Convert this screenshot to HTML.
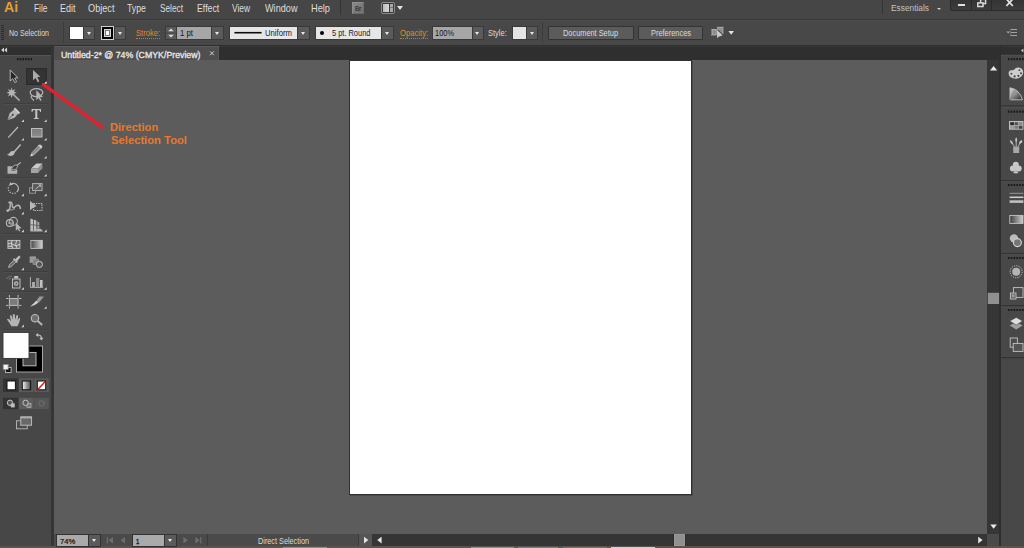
<!DOCTYPE html>
<html>
<head>
<meta charset="utf-8">
<title>Untitled-2</title>
<style>
html,body{margin:0;padding:0;}
body{width:1024px;height:548px;overflow:hidden;background:#484848;font-family:"Liberation Sans",sans-serif;position:relative;color:#d6d6d6;}
.abs{position:absolute;}
.tx{position:absolute;white-space:nowrap;line-height:normal;transform-origin:0 50%;display:block;}
#menubar{left:0;top:0;width:1024px;height:19px;background:#464646;}
#menubar .mi{position:absolute;top:3px;font-size:10px;color:#dcdcdc;line-height:12px;white-space:nowrap;}
#menuline{left:0;top:19px;width:1024px;height:1px;background:#383838;}
#ctrlbar{left:0;top:20px;width:1024px;height:25px;background:#484848;box-shadow:inset 0 1px 0 #4e4e4e;}
#ctrlline{left:0;top:45px;width:1024px;height:1px;background:#2e2e2e;}
.lbl{position:absolute;font-size:8px;line-height:10px;white-space:nowrap;color:#d8d8d8;}
.olbl{color:#e08a2a;border-bottom:1px dotted #e08a2a;}
.fld{position:absolute;background:#a6a6a6;border:1px solid #3a3a3a;box-sizing:border-box;color:#1a1a1a;font-size:8px;line-height:11px;}
.dd{position:absolute;background:#5a5a5a;border:1px solid #3a3a3a;box-sizing:border-box;}
.dd:after{content:"";position:absolute;left:50%;top:50%;margin-left:-2.8px;margin-top:-1.3px;border-left:2.8px solid transparent;border-right:2.8px solid transparent;border-top:3.4px solid #e8e8e8;}
.dd.sm:after{border-top-width:3px;border-left-width:2.4px;border-right-width:2.4px;margin-left:-2.4px;margin-top:-1px;}
.btn{position:absolute;background:#5b5b5b;border:1px solid #333;box-sizing:border-box;color:#dadada;font-size:8px;line-height:11px;text-align:center;border-radius:1px;}
#toolhead{left:0;top:46px;width:51px;height:9px;background:#2f2f2f;box-shadow:inset 0 1px 0 #3a3a3a;}
#tools{left:0;top:55px;width:51px;height:491px;background:#474747;box-shadow:inset 0 1px 0 #545454;}
#gapL{left:51px;top:46px;width:3px;height:500px;background:#353535;}
#tabbar{left:54px;top:46px;width:945px;height:14px;background:#2f2f2f;box-shadow:inset 0 1px 0 #383838;}
#tab{left:54px;top:46px;width:165px;height:14px;background:#4f4f4f;box-shadow:inset 0 1px 0 #5c5c5c, inset -1px 0 0 #585858;}
#tabtxt{left:60px;top:48px;font-size:8.5px;line-height:10px;color:#e4e4e4;font-weight:bold;white-space:nowrap;}
#canvas{left:54px;top:60px;width:933px;height:474px;background:#5c5c5c;overflow:hidden;}
#artboard{left:296px;top:1px;width:341px;height:433px;background:#fff;box-shadow:0 0 0 1px #303030,1px 1px 0 1px rgba(48,48,48,0.4);}
#vscroll{left:987px;top:60px;width:12px;height:474px;background:#363636;}
#bottombar{left:54px;top:534px;width:946px;height:12px;background:#4a4a4a;}
#rightgap{left:999px;top:46px;width:2px;height:500px;background:#2e2e2e;}
#rpanel{left:1001px;top:46px;width:23px;height:500px;background:#484848;}
#rhead{left:1001px;top:46px;width:23px;height:9px;background:#2f2f2f;box-shadow:inset 0 1px 0 #3a3a3a;}
#bstrip{left:0;top:546px;width:1024px;height:2px;background:#58554e;}
</style>
</head>
<body>
<div id="menubar" class="abs"></div>
<div id="menuline" class="abs"></div>
<div id="ctrlbar" class="abs"></div>
<div id="ctrlline" class="abs"></div>

<!-- menubar widgets -->
<div class="abs" style="left:340px;top:0;width:1px;height:15px;background:#353535;"></div>
<div class="abs" style="left:352px;top:2px;width:12px;height:12px;box-sizing:border-box;border:1px solid #8e8e8e;border-right-color:#6e6e6e;border-bottom-color:#6a6a6a;background:linear-gradient(135deg,#888 0,#707070 100%);"></div>
<div class="abs" style="left:381px;top:2px;width:14px;height:12px;box-sizing:border-box;border:1px solid #8a8a8a;border-radius:2px;background:#3a3a3a;"></div>
<div class="abs" style="left:383px;top:4px;width:6px;height:8px;background:linear-gradient(90deg,#bdbdbd,#d6d6d6);"></div>
<div class="abs" style="left:390px;top:4px;width:3px;height:8px;background:#a8a8a8;"></div>
<div class="abs" style="left:390px;top:7px;width:3px;height:1px;background:#777;"></div>
<div class="abs" style="left:397px;top:6px;width:0;height:0;border-left:3px solid transparent;border-right:3px solid transparent;border-top:4px solid #e2e2e2;"></div>
<div class="abs" style="left:882px;top:0;width:1px;height:14px;background:#353535;"></div>
<div class="abs" style="left:937px;top:8px;width:0;height:0;border-left:2px solid transparent;border-right:2px solid transparent;border-top:2px solid #cfcfcf;"></div>
<div class="abs" style="left:950px;top:-1px;width:74px;height:12px;box-sizing:border-box;border:1px solid #2a2a2a;border-right:none;border-radius:0 0 0 3px;background:linear-gradient(#343434,#3c3c3c);"></div>
<div class="abs" style="left:971px;top:0;width:1px;height:10px;background:#2a2a2a;"></div>
<div class="abs" style="left:991px;top:0;width:1px;height:10px;background:#2a2a2a;"></div>
<div class="abs" style="left:958px;top:4px;width:7px;height:2px;background:#e0e0e0;"></div>
<svg class="abs" style="left:976px;top:0" width="11" height="8" viewBox="976 0 11 8"><rect x="980.600" y="-0.600" width="5" height="4.200" fill="none" stroke="#dadada" stroke-width="1.500"/><rect x="977.800" y="2.900" width="5.200" height="3.600" fill="#383838" stroke="#dadada" stroke-width="1.500"/></svg>
<svg class="abs" style="left:1005px;top:0" width="10" height="7" viewBox="1005 0 10 7"><path d="M1006.400 -1 L1012.800 6 M1012.800 -1 L1006.400 6" stroke="#e2e2e2" stroke-width="1.800" fill="none"/></svg>
<!-- control bar right menu -->
<svg class="abs" style="left:1005px;top:27px" width="14" height="11" viewBox="1005 27 14 11"><path d="M1006.400 31.400 H1010 L1008.200 33.600Z" fill="#a8a8a8"/><path d="M1011 29.500H1017M1011 32.500H1017M1011 35.500H1017" stroke="#a4a4a4" stroke-width="1"/><path d="M1010.500 29 V36" stroke="#8a8a8a" stroke-width="0.600"/></svg>
<!-- control bar widgets -->
<div class="abs" style="left:1px;top:25px;width:3px;height:16px;background:repeating-linear-gradient(to bottom,#2c2c2c 0,#2c2c2c 1px,transparent 1px,transparent 2px);"></div>
<div class="abs" style="left:63px;top:22px;width:1px;height:21px;background:#3c3c3c;"></div>
<div class="fld" style="left:69px;top:26px;width:15px;height:14px;background:#fff;"></div>
<div class="dd sm" style="left:83px;top:26px;width:12px;height:14px;"></div>
<div class="abs" style="left:101px;top:26px;width:13px;height:14px;background:#000;border:1px solid #cfcfcf;box-sizing:border-box;"></div>
<div class="abs" style="left:104px;top:29px;width:7px;height:8px;background:#777;border:1px solid #d8d8d8;box-sizing:border-box;"></div><div class="abs" style="left:106px;top:31px;width:3px;height:4px;background:#fff;"></div>
<div class="dd sm" style="left:114px;top:26px;width:12px;height:14px;"></div>
<div class="dd" style="left:165px;top:26px;width:12px;height:14px;"></div>
<svg class="abs" style="left:165px;top:26px" width="12" height="14" viewBox="0 0 12 14"><rect x="1" y="1" width="10" height="12" fill="#5a5a5a"/><path d="M1 7H11" stroke="#444" stroke-width="1"/><path d="M3.200 5.200 L6 2.400 L8.800 5.200Z M3.200 8.800 L6 11.600 L8.800 8.800Z" fill="#dcdcdc"/></svg>
<div class="abs" style="left:136px;top:38px;width:24px;height:0;border-top:1px dotted #c07a2a;"></div>
<div class="abs" style="left:400px;top:38px;width:28px;height:0;border-top:1px dotted #c07a2a;"></div>
<div class="fld" style="left:176px;top:26px;width:36px;height:14px;"></div>
<div class="dd" style="left:211px;top:26px;width:13px;height:14px;"></div>
<div class="fld" style="left:229px;top:26px;width:69px;height:14px;background:#e6e6e6;"></div>
<svg class="abs" style="left:234px;top:30px" width="30" height="6" viewBox="234 30 30 6"><path d="M234.400 32.700H261.600" stroke="#0c0c0c" stroke-width="1.600"/></svg>
<div class="dd" style="left:297px;top:26px;width:13px;height:14px;"></div>
<div class="fld" style="left:315px;top:26px;width:67px;height:14px;background:#e6e6e6;"></div>
<div class="abs" style="left:320px;top:31px;width:4px;height:4px;border-radius:2px;background:#000;"></div>
<div class="dd" style="left:381px;top:26px;width:13px;height:14px;"></div>
<div class="fld" style="left:432px;top:26px;width:41px;height:14px;"></div>
<div class="dd" style="left:472px;top:26px;width:12px;height:14px;"></div>
<div class="fld" style="left:512px;top:26px;width:15px;height:14px;background:#e4e4e4;"></div>
<div class="dd sm" style="left:526px;top:26px;width:12px;height:14px;"></div>
<div class="abs" style="left:542px;top:22px;width:1px;height:21px;background:#3c3c3c;"></div>
<div class="btn" style="left:548px;top:26px;width:86px;height:14px;"></div>
<div class="btn" style="left:638px;top:26px;width:65px;height:14px;"></div>


<div id="toolhead" class="abs"></div>
<div id="tools" class="abs"></div>
<div id="gapL" class="abs"></div>
<div id="tabbar" class="abs"></div>
<div id="tab" class="abs"></div>
<div id="canvas" class="abs"><div id="artboard" class="abs"></div></div>
<div id="vscroll" class="abs"></div>
<div id="bottombar" class="abs"></div>
<div id="rightgap" class="abs"></div>
<div id="rpanel" class="abs"></div>
<div id="rhead" class="abs"></div>
<div id="bstrip" class="abs"></div>
<svg class="abs" style="left:0;top:0" width="56" height="548" viewBox="0 0 56 548">
<defs>
<linearGradient id="gH" x1="0" x2="1" y1="0" y2="0"><stop offset="0" stop-color="#4a4a4a"/><stop offset="1" stop-color="#d0d0d0"/></linearGradient>
<linearGradient id="gV" x1="0" x2="0" y1="0" y2="1"><stop offset="0" stop-color="#7c7c7c"/><stop offset="1" stop-color="#8c8c8c"/></linearGradient>
<linearGradient id="gW" x1="0" x2="1" y1="0" y2="0"><stop offset="0" stop-color="#f4f4f4"/><stop offset="1" stop-color="#4a4a4a"/></linearGradient>
</defs>
<!-- header chevrons -->
<path d="M4 47.500 L1.100 50 L4 52.500Z M7.100 47.500 L4.200 50 L7.100 52.500Z" fill="#d0d0d0"/>
<!-- grip -->
<path d="M17 59.200H32.200" stroke="#181818" stroke-width="2.200" stroke-dasharray="1.600 1.100"/>
<!-- separators -->
<g stroke="#3e3e3e" stroke-width="1"><path d="M3 103.5H48M3 177.5H48M3 233.5H48M3 271.5H48M3 291.5H48M3 329.5H48"/></g>
<g stroke="#4d4d4d" stroke-width="1"><path d="M3 104.5H48M3 178.5H48M3 234.5H48M3 272.5H48M3 292.5H48M3 330.5H48"/></g>
<!-- selected tool bg -->
<rect x="26.5" y="68.5" width="20" height="16" fill="#333" stroke="#2b2b2b"/>
<!-- selection tool -->
<path d="M10.2 70 V81 L12.8 78.7 L14.8 82.6 L16.6 81.7 L14.7 78 L18 77.8Z" fill="#262626" stroke="#c2c2c2" stroke-width="0.9" stroke-linejoin="round"/>
<!-- direct selection -->
<path d="M33 70 V80.3 L35.6 78 L37.7 82.3 L39.3 81.5 L37.3 77.3 L40.3 76.8Z" fill="#ababab"/>
<path d="M0 2.600 L2.600 0 V2.600Z" fill="#fff" transform="translate(44 81.2)"/>
<!-- magic wand -->
<path d="M11.6 87.6 L12.6 90.6 L15.4 89 L13.9 91.8 L16.9 92.8 L13.9 93.8 L15.2 96.4 L12.6 95 L11.6 98 L10.6 95 L7.9 96.5 L9.3 93.8 L6.4 92.8 L9.3 91.8 L7.9 89.1 L10.6 90.6Z" fill="#b4b4b4"/>
<path d="M13.5 94.6 L19.6 100.6" stroke="#a8a8a8" stroke-width="1.5"/>
<!-- lasso -->
<ellipse cx="36.5" cy="92.6" rx="6.3" ry="4" fill="none" stroke="#b8b8b8" stroke-width="1.2"/>
<path d="M31.5 95.5 q-1 2 1 3.5 q1.5 1 1 2" fill="none" stroke="#b0b0b0" stroke-width="1.1"/>
<path d="M36.3 90.3 V100.3 L38.6 98 L40.3 101 L41.6 100.3 L40 97.3 L43 97Z" fill="#b2b2b2"/>
<!-- pen -->
<path d="M7.4 120.2 L9.6 113.2 L14.2 109.4 L18.2 113.4 L14.6 117.8Z" fill="#b6b6b6"/>
<path d="M7.6 120 L12.6 115" stroke="#4a4a4a" stroke-width="0.8"/>
<circle cx="12.8" cy="114.8" r="1" fill="#3c3c3c"/>
<path d="M15 107.6 L20.2 112.8 L18.6 114.2 L13.6 109Z" fill="#cdcdcd"/>
<path d="M0 2.600 L2.600 0 V2.600Z" fill="#d6d6d6" transform="translate(21.3 119.4)"/>
<path d="M0 2.600 L2.600 0 V2.600Z" fill="#d6d6d6" transform="translate(44 119.4)"/>
<!-- type -->
<path d="M31.600 109 H41 V112 H40.300 Q40 110.200 38.400 110.100 H37.300 V117.200 Q37.300 118.100 38.800 118.200 V118.900 H33.800 V118.200 Q35.300 118.100 35.300 117.200 V110.100 H34.200 Q32.600 110.200 32.300 112 H31.600Z" fill="#c6c6c6"/>
<!-- line -->
<path d="M8.2 137.6 L18 127" stroke="#bcbcbc" stroke-width="1.2"/>
<path d="M0 2.600 L2.600 0 V2.600Z" fill="#d6d6d6" transform="translate(21.3 138)"/>
<!-- rectangle -->
<rect x="31.5" y="128.5" width="10.5" height="8.5" fill="url(#gV)" stroke="#bdbdbd"/>
<path d="M0 2.600 L2.600 0 V2.600Z" fill="#d6d6d6" transform="translate(44 138)"/>
<!-- brush -->
<path d="M20.6 144.4 L13.6 152.4" stroke="#b9b9b9" stroke-width="1.5"/>
<path d="M13.2 150.8 Q10.5 151 9.2 153.2 Q8.4 154.4 6.8 154.6 Q9.6 156.6 12.6 155.6 Q14.8 154.4 14.6 152.2Z" fill="#bababa"/>
<!-- pencil -->
<path d="M38.2 145.6 L41.4 148.2 L34.4 155 L30.4 156.6 L31.6 152.4Z" fill="#9c9c9c"/>
<path d="M38.2 145.6 Q40 144.200 41.4 145.6 Q42.6 146.800 41.4 148.2Z" fill="#d2d2d2" stroke="#d2d2d2" stroke-width="0.8"/>
<path d="M30.4 156.6 L31.3 153.400 L33.5 155.3Z" fill="#dcdcdc"/>
<path d="M32.4 153.6 L39.6 146.6" stroke="#6c6c6c" stroke-width="0.7"/>
<path d="M0 2.600 L2.600 0 V2.600Z" fill="#d6d6d6" transform="translate(44 156)"/>
<!-- blob brush -->
<path d="M7.500 166.200 H12.600 Q10.400 168.600 11.200 170.600 Q14.400 172 17.200 169 V173.800 H7.500Z" fill="#b2b2b2"/>
<path d="M11.600 170.200 Q11.600 166.600 15 165 Q17.600 164.400 17.600 166.600 Q16.400 170.400 11.600 170.200Z" fill="#3a3a3a" stroke="#b8b8b8" stroke-width="0.900"/>
<path d="M17 165.400 L20.800 162.400" stroke="#bdbdbd" stroke-width="1.200"/>
<!-- eraser -->
<path d="M31 168.600 L36.4 163.600 H42.4 L38 168.600Z" fill="#cacaca"/>
<path d="M31 168.600 H38 V173 H31Z" fill="#a4a4a4"/>
<path d="M38 168.600 L42.4 163.600 V168.200 L38 173Z" fill="#8e8e8e"/>
<path d="M0 2.600 L2.600 0 V2.600Z" fill="#d6d6d6" transform="translate(44 174)"/>
<!-- rotate -->
<path d="M11.400 183.800 A5 5 0 0 1 16.700 192.100" fill="none" stroke="#b8b8b8" stroke-width="1.200"/>
<path d="M15.600 192.900 A5 5 0 0 1 9.200 185.600" fill="none" stroke="#b8b8b8" stroke-width="1.200" stroke-dasharray="1.200 1.300"/>
<path d="M9.200 185.600 L10.200 182.200 L13 184.800Z" fill="#c4c4c4"/>
<path d="M0 2.600 L2.600 0 V2.600Z" fill="#d6d6d6" transform="translate(21.3 193.600)"/>
<!-- scale -->
<rect x="29.600" y="187.800" width="6" height="5.400" fill="none" stroke="#9c9c9c" stroke-width="0.9"/>
<rect x="32.600" y="183.600" width="9.500" height="7" fill="#5c5c5c" stroke="#b8b8b8" stroke-width="0.9"/>
<path d="M35.600 189.200 L40.400 185" stroke="#c0c0c0" stroke-width="0.9"/>
<path d="M38.200 184.600 H40.800 V187.200Z" fill="#c4c4c4"/>
<path d="M0 2.600 L2.600 0 V2.600Z" fill="#d6d6d6" transform="translate(44 193.600)"/>
<!-- width/warp tool -->
<path d="M7.400 211 Q9.400 210.600 10 207.400 Q10.800 203 9.200 202.400 Q11.600 201 12.200 204.600 Q12.400 208.600 14.400 207.400 Q16.200 205 18.200 205.200 Q20.400 205.800 20.400 209" fill="none" stroke="#b4b4b4" stroke-width="1.500"/>
<path d="M8 209.600 Q12 211 15 208.600" fill="none" stroke="#a4a4a4" stroke-width="1"/>
<circle cx="7.600" cy="210.600" r="1.200" fill="#c4c4c4"/>
<path d="M0 2.600 L2.600 0 V2.600Z" fill="#d6d6d6" transform="translate(21.3 211.800)"/>
<!-- free transform -->
<rect x="33.500" y="203.500" width="8.500" height="7" fill="none" stroke="#bdbdbd" stroke-width="1.100" stroke-dasharray="1.400 1"/>
<path d="M30 201 V210.400 L32.400 208.200 L36.600 206Z" fill="#b8b8b8"/>
<!-- shape builder -->
<circle cx="9.800" cy="223" r="3.400" fill="none" stroke="#bcbcbc" stroke-width="1.100"/>
<circle cx="13.400" cy="221.400" r="4" fill="none" stroke="#b0b0b0" stroke-width="1.100"/>
<path d="M8 223 H14" stroke="#bdbdbd" stroke-width="0.9"/>
<path d="M15.800 222.600 V230.800 L17.800 229 L19 231.400 L20.200 230.800 L19 228.400 L21.600 228.200Z" fill="#b4b4b4"/>
<path d="M0 2.600 L2.600 0 V2.600Z" fill="#d6d6d6" transform="translate(21.3 229.600)"/>
<!-- perspective grid -->
<path d="M30.400 218.400 L33.200 219.400 V231 H30.400Z M34 219.800 L36.400 220.600 V231 H34Z" fill="#bebebe"/>
<path d="M37.300 221.400 L39.300 222.200 V228.400 H37.300Z" fill="#a6a6a6"/>
<path d="M36.400 228.800 H40.600 L42.600 230.400 V231.400 H30.400 V230.400 H36.400Z" fill="#b4b4b4"/>
<path d="M30.400 224.600 L39.300 225.600" stroke="#5a5a5a" stroke-width="0.800"/>
<path d="M0 2.600 L2.600 0 V2.600Z" fill="#d6d6d6" transform="translate(44 229.600)"/>
<!-- mesh -->
<rect x="7.900" y="240.400" width="12" height="8" fill="#6a6a6a" stroke="#c4c4c4" stroke-width="0.9"/>
<path d="M8 244 Q11 242 13 244.600 Q16 247 20 244.400 M12 240.400 Q10.600 244 12.600 248.400 M16.600 240.400 Q14.600 244.600 17 248.400 M8 246.600 Q10 245.400 12 246.600" fill="none" stroke="#dcdcdc" stroke-width="0.9"/>
<!-- gradient -->
<rect x="30.900" y="240.400" width="11.400" height="8" fill="url(#gH)" stroke="#c0c0c0" stroke-width="0.9"/>
<!-- eyedropper -->
<path d="M8.600 267.400 L9.400 264.800 L15 259.200 L16.800 261 L11.200 266.600Z" fill="#6c6c6c" stroke="#b8b8b8" stroke-width="0.9"/>
<path d="M13.600 258.600 L17.400 262.400" stroke="#b4b4b4" stroke-width="1.800"/>
<path d="M15.600 259.600 L18.400 256.400 Q19.800 255.400 20 257.200 L17 260.800Z" fill="#c0c0c0" stroke="#c0c0c0" stroke-width="0.800"/>
<path d="M0 2.600 L2.600 0 V2.600Z" fill="#d6d6d6" transform="translate(21.3 267.600)"/>
<!-- blend -->
<rect x="29.600" y="256.400" width="6.400" height="6.400" fill="#9a9a9a"/>
<rect x="33" y="259" width="5.600" height="5.600" fill="#828282" stroke="#9c9c9c" stroke-width="0.600"/>
<circle cx="39.400" cy="264.400" r="3.100" fill="#585858" stroke="#c6c6c6" stroke-width="1"/>
<!-- symbol sprayer -->
<rect x="12.500" y="279" width="7.500" height="9" fill="#4c4c4c" stroke="#bcbcbc" stroke-width="1"/>
<rect x="14.200" y="276" width="4" height="2.400" fill="#c4c4c4"/>
<circle cx="16.200" cy="283.600" r="2.300" fill="#b4b4b4"/>
<path d="M15.600 282.400 L17.600 283.600 L15.600 284.800Z" fill="#4c4c4c"/>
<path d="M7 278.600 L8.400 277.200 M9.400 279.400 L10.600 278 M9 276.600 L9.800 275.800 M11 276.800 L11.600 276" stroke="#a8a8a8" stroke-width="0.800"/>
<path d="M0 2.600 L2.600 0 V2.600Z" fill="#d6d6d6" transform="translate(21.3 287.200)"/>
<!-- graph -->
<path d="M30.400 277 V287.400 H43" fill="none" stroke="#bcbcbc" stroke-width="0.900"/>
<rect x="32" y="282" width="3" height="5" fill="#a8a8a8"/>
<rect x="36" y="278" width="3.300" height="9" fill="#8a8a8a"/>
<rect x="40" y="280" width="2.600" height="7" fill="#c2c2c2"/>
<path d="M0 2.600 L2.600 0 V2.600Z" fill="#d6d6d6" transform="translate(44 287.200)"/>
<!-- artboard -->
<rect x="9.400" y="298.500" width="8.700" height="6.900" fill="#7c7c7c"/>
<path d="M6 298.500 H8.600 M9.400 298.500 H18.100 M18.900 298.500 H21.400 M6 305.400 H8.600 M9.400 305.400 H18.100 M18.900 305.400 H21.400 M9.400 295 V297.700 M9.400 298.500 V305.400 M9.400 306.200 V308.600 M18.100 295 V297.700 M18.100 298.500 V305.400 M18.100 306.200 V308.600" stroke="#c8c8c8" stroke-width="0.900"/>
<!-- slice -->
<path d="M30 306.800 Q34 303.400 36.400 300.600 L38.600 302.400 Q35 305.400 30 306.800Z" fill="#d0d0d0"/>
<path d="M36.600 300.400 L39.400 296.600 H44 L39 302.400Z" fill="#9a9a9a"/>
<path d="M0 2.600 L2.600 0 V2.600Z" fill="#d6d6d6" transform="translate(44 306.200)"/>
<!-- hand -->
<path d="M11.400 326.200 Q9.400 322.800 7 319.600 Q7.600 318.200 9.400 319.400 L11 321.200 L9.800 315.800 Q10.600 314.600 11.600 315.600 L12.800 319.800 L12.800 314.600 Q13.800 313.600 14.800 314.600 L15.200 319.800 L16.400 315.400 Q17.600 314.600 18.200 315.800 L17.600 320.600 L19 318 Q20.200 317.600 20.200 318.800 Q19.400 323 17.400 326.200Z" fill="#b4b4b4"/>
<path d="M0 2.600 L2.600 0 V2.600Z" fill="#d6d6d6" transform="translate(21.3 324.600)"/>
<!-- zoom -->
<circle cx="35" cy="318.200" r="3.700" fill="#707070" stroke="#b8b8b8" stroke-width="1.200"/>
<path d="M37.800 321 L42.200 325" stroke="#b8b8b8" stroke-width="1.800"/>
<!-- fill / stroke -->
<rect x="16.500" y="346" width="26" height="26" fill="#000" stroke="#b4b4b4" stroke-width="0.900"/>
<rect x="23" y="352.400" width="13" height="13.400" fill="#484848" stroke="#c8c8c8" stroke-width="0.900"/>
<rect x="3" y="332.400" width="26" height="26" fill="#fff" stroke="#333" stroke-width="0.900"/>
<!-- swap -->
<path d="M37.400 335 Q41.400 334.600 41.400 338.600" fill="none" stroke="#c4c4c4" stroke-width="1.100"/>
<path d="M35.600 335 L38.200 333 V337Z M41.400 340.400 L39.400 337.800 H43.400Z" fill="#c4c4c4"/>
<!-- default -->
<rect x="5.500" y="367.500" width="5.600" height="5" fill="#111" stroke="#bdbdbd" stroke-width="0.900"/>
<rect x="3.200" y="364.500" width="5" height="5" fill="#f4f4f4" stroke="#888" stroke-width="0.800"/>
<!-- color mode row -->
<rect x="3" y="378.400" width="15.400" height="13.600" fill="#333"/>
<rect x="18.900" y="378.400" width="14.700" height="13.600" fill="#5a5a5a"/>
<rect x="34.100" y="378.400" width="14.700" height="13.600" fill="#5a5a5a"/>
<rect x="7" y="381" width="8.400" height="8.800" fill="#fff" stroke="#111" stroke-width="1"/>
<rect x="22.300" y="381" width="8.400" height="8.800" fill="url(#gW)" stroke="#111" stroke-width="1"/>
<rect x="37.300" y="381" width="8.400" height="8.800" fill="#fff" stroke="#111" stroke-width="1"/>
<path d="M37.800 389.400 L45.200 381.400" stroke="#e01818" stroke-width="1.500"/>
<!-- draw mode row -->
<rect x="3" y="397.800" width="15.400" height="11.400" fill="#333"/>
<rect x="18.900" y="397.800" width="14.700" height="11.400" fill="#5c5c5c"/>
<rect x="34.100" y="397.800" width="14.700" height="11.400" fill="#565656"/>
<circle cx="10" cy="402.800" r="2.700" fill="#555" stroke="#c4c4c4" stroke-width="1"/>
<rect x="10.800" y="403.400" width="4" height="4" fill="#bdbdbd"/>
<rect x="27" y="403.400" width="4" height="4" fill="#7a7a7a" stroke="#b4b4b4" stroke-width="0.700"/>
<circle cx="25.600" cy="402.800" r="2.700" fill="#5c5c5c" stroke="#c4c4c4" stroke-width="1"/>
<circle cx="41.600" cy="403.400" r="2.700" fill="none" stroke="#6e6e6e" stroke-width="1"/>
<path d="M41.600 403.400 H44" stroke="#6e6e6e" stroke-width="0.800"/>
<!-- screen mode -->
<rect x="16.500" y="420.800" width="10.800" height="8" fill="#4c4c4c" stroke="#b8b8b8" stroke-width="0.900"/>
<rect x="20.800" y="416.800" width="10.800" height="8.400" fill="#686868" stroke="#c4c4c4" stroke-width="0.900"/>
<path d="M20.800 417.800 H31.600" stroke="#c4c4c4" stroke-width="1"/>
</svg>

<svg class="abs" style="left:984px;top:44px" width="40" height="504" viewBox="984 44 40 504">
<defs>
<linearGradient id="rgH" x1="0" x2="1" y1="0" y2="0"><stop offset="0" stop-color="#3c3c3c"/><stop offset="1" stop-color="#cfcfcf"/></linearGradient>
<linearGradient id="rgF" x1="0" x2="1" y1="0" y2="1"><stop offset="0" stop-color="#d8d8d8"/><stop offset="0.5" stop-color="#8c8c8c"/><stop offset="1" stop-color="#1c1c1c"/></linearGradient>
</defs>
<!-- header collapse arrow -->
<path d="M1023.4 48.400 V52.400 L1021 50.400Z" fill="#c8c8c8"/>
<!-- group separators -->
<g stroke="#333" stroke-width="1.400"><path d="M1001 106H1024M1001 180.600H1024M1001 253.600H1024M1001 305.800H1024M1001 357.600H1024"/></g>
<g stroke="#545454" stroke-width="0.800"><path d="M1001 55.200H1024M1001 107.200H1024M1001 181.800H1024M1001 254.800H1024M1001 307H1024"/></g>
<!-- grips -->
<g stroke="#181818" stroke-width="2.200" stroke-dasharray="1.600 1.250"><path d="M1007.900 59.100H1024M1007.900 111.600H1024M1007.900 185H1024M1007.900 258H1024M1007.900 310H1024"/></g>
<!-- vscroll arrows & thumb -->
<path d="M990 70.400 L993.600 66 L997.200 70.400Z" fill="#eaeaea"/>
<path d="M990.400 524.600 L993.600 528.800 L996.800 524.600Z" fill="#eaeaea"/>
<rect x="987.800" y="292.800" width="11.300" height="11.200" fill="#909090"/>
<!-- color palette -->
<path d="M1008.600 73.600 Q1008.600 70.600 1011.400 70.200 Q1014 70.400 1014.600 69.200 Q1015.600 67.200 1019 67.400 Q1023.400 68.400 1023.200 72.800 Q1022.400 77.600 1016.200 78.800 Q1009 78.600 1008.600 73.600Z" fill="#cdcdcd"/>
<circle cx="1011.400" cy="73.800" r="1" fill="#474747"/><circle cx="1014.600" cy="76.400" r="1.100" fill="#474747"/><circle cx="1018.400" cy="75.800" r="1.100" fill="#474747"/><circle cx="1021" cy="73.200" r="1" fill="#474747"/><circle cx="1019.400" cy="70.200" r="0.900" fill="#474747"/>
<!-- color guide fan -->
<path d="M1010 87.800 Q1019.600 89.400 1022.400 99.800 H1010Z" fill="url(#rgF)" stroke="#c4c4c4" stroke-width="0.900"/>
<path d="M1010 99.800 L1015.400 89.600 M1010 99.800 L1019.800 93.400" stroke="#6a6a6a" stroke-width="0.500"/>
<!-- swatches -->
<rect x="1009.400" y="121.400" width="13.600" height="7.800" fill="#b8b8b8" stroke="#c8c8c8" stroke-width="0.800"/>
<rect x="1010.200" y="122.200" width="3.700" height="3" fill="#2a2a2a"/><rect x="1014.500" y="122.200" width="3.700" height="3" fill="#555"/><rect x="1018.800" y="122.200" width="3.700" height="3" fill="#8a8a8a"/>
<rect x="1010.200" y="125.800" width="3.700" height="3" fill="#9a9a9a"/><rect x="1014.500" y="125.800" width="3.700" height="3" fill="#7a7a7a"/><rect x="1018.800" y="125.800" width="3.700" height="3" fill="#444"/>
<!-- brushes -->
<rect x="1013.200" y="146.600" width="6" height="6.400" fill="#a8a8a8"/>
<path d="M1014.400 146.600 L1011.600 142.400 M1016.200 146.600 V140 M1018 146.600 L1020.400 142.600" stroke="#b4b4b4" stroke-width="1"/>
<path d="M1010.400 140.400 Q1012.600 141.400 1012.600 143.800 Q1010.400 143.400 1010.400 140.400Z M1016.200 137.800 Q1017.400 139.800 1016.200 141.600 Q1015 139.800 1016.200 137.800Z M1019.400 143.400 Q1019.400 140.800 1022 140.600 Q1022.400 143 1019.400 143.400Z" fill="#d0d0d0" stroke="#d0d0d0" stroke-width="0.600"/>
<!-- symbols club -->
<circle cx="1015.800" cy="164.800" r="3" fill="#c8c8c8"/><circle cx="1012.900" cy="168.600" r="3" fill="#c8c8c8"/><circle cx="1018.700" cy="168.600" r="3" fill="#c8c8c8"/>
<path d="M1015.800 167 Q1016 171 1013.600 173 H1018 Q1015.800 171 1015.800 167Z" fill="#c8c8c8" stroke="#c8c8c8" stroke-width="0.600"/>
<!-- stroke panel -->
<path d="M1009.600 193.300 H1023.400" stroke="#a8a8a8" stroke-width="0.800"/>
<path d="M1009.600 197.300 H1023.400" stroke="#d0d0d0" stroke-width="1.500"/>
<path d="M1009.600 201.600 H1023.400" stroke="#c0c0c0" stroke-width="2.600"/>
<!-- gradient -->
<rect x="1009.800" y="215.400" width="13.200" height="8" fill="url(#rgH)" stroke="#c4c4c4" stroke-width="0.900"/>
<!-- transparency -->
<circle cx="1014" cy="238.400" r="4.200" fill="#bdbdbd"/>
<circle cx="1017.400" cy="242.600" r="4" fill="#767676" stroke="#d6d6d6" stroke-width="1.100"/>
<!-- appearance -->
<circle cx="1016.200" cy="271.800" r="4" fill="#b4b4b4"/>
<circle cx="1016.200" cy="271.800" r="6" fill="none" stroke="#c4c4c4" stroke-width="1" stroke-dasharray="1.200 1.100"/>
<!-- graphic styles -->
<rect x="1013.400" y="287.600" width="9.600" height="9.800" fill="#4c4c4c" stroke="#c4c4c4" stroke-width="0.900"/>
<rect x="1010.400" y="293" width="5.600" height="6" fill="#5a5a5a" stroke="#c4c4c4" stroke-width="0.900"/>
<rect x="1011.600" y="294.200" width="3" height="3.200" fill="#9a9a9a"/>
<!-- layers -->
<path d="M1016.200 322 L1022.600 325.600 L1016.200 329.600 L1009.800 325.600Z" fill="#a0a0a0"/>
<path d="M1016.200 317.400 L1022.600 321 L1016.200 325 L1009.800 321Z" fill="#dedede" stroke="#484848" stroke-width="0.600"/>
<!-- artboards -->
<rect x="1010.200" y="338" width="7.200" height="9.200" fill="#4c4c4c" stroke="#c4c4c4" stroke-width="0.900"/>
<rect x="1013.200" y="343.400" width="9.800" height="8" fill="#545454" stroke="#c4c4c4" stroke-width="0.900"/>
</svg>

<!-- annotation -->
<svg class="abs" style="left:30px;top:70px" width="90" height="70" viewBox="30 70 90 70"><path d="M43.200 84.400 L102.600 127.400" stroke="#e5202e" stroke-width="3.200" stroke-linecap="round"/></svg>
<!-- tab close -->
<svg class="abs" style="left:208px;top:49px" width="8" height="8" viewBox="0 0 8 8"><path d="M2 2.400 L5.800 6.200 M5.800 2.400 L2 6.200" stroke="#d0d0d0" stroke-width="1"/></svg>
<!-- bottom bar -->
<div class="fld" style="left:56px;top:534px;width:33px;height:13px;background:#aaa;border-color:#333;"></div>
<div class="dd" style="left:88px;top:534px;width:13px;height:13px;border-color:#333;"></div>
<div class="fld" style="left:132px;top:534px;width:33px;height:13px;background:#aaa;border-color:#333;"></div>
<div class="dd" style="left:164px;top:534px;width:13px;height:13px;border-color:#333;"></div>
<svg class="abs" style="left:100px;top:534px" width="280" height="13" viewBox="100 534 280 13">
<path d="M107.400 537 V543.600" stroke="#6e6e6e" stroke-width="1.200"/><path d="M113 537 V543.600 L108.600 540.300Z" fill="#6e6e6e"/>
<path d="M125 537 V543.600 L120.600 540.300Z" fill="#6e6e6e"/>
<path d="M183.400 537 V543.600 L187.800 540.300Z" fill="#6e6e6e"/>
<path d="M195.400 537 V543.600 L199.800 540.300Z" fill="#6e6e6e"/><path d="M200.800 537 V543.600" stroke="#6e6e6e" stroke-width="1.200"/>
<path d="M207.500 534 V546" stroke="#3a3a3a" stroke-width="1"/>
<path d="M358.500 534 V546" stroke="#3a3a3a" stroke-width="1"/>
<rect x="359" y="534" width="13" height="12" fill="#555"/>
<path d="M364 536.800 V543.400 L368.400 540.100Z" fill="#e0e0e0"/>
</svg>
<div class="abs" style="left:372px;top:534px;width:614px;height:12px;background:#353535;"></div>
<div class="abs" style="left:673px;top:534px;width:13px;height:12px;background:#2c2c2c;"></div><div class="abs" style="left:674px;top:534px;width:11.400px;height:12px;background:#909090;box-shadow:inset 0 0 0 1px #989898;"></div>
<svg class="abs" style="left:372px;top:534px" width="628" height="13" viewBox="372 534 628 13">
<path d="M381.600 536.800 V543.400 L377.200 540.100Z" fill="#e6e6e6"/>
<path d="M978.200 536.800 V543.400 L982.600 540.100Z" fill="#e6e6e6"/>
</svg>
<div class="abs" style="left:986px;top:534px;width:13px;height:12px;background:#4a4a4a;border-left:1px solid #333;box-sizing:border-box;"></div>
<!-- align icon -->
<svg class="abs" style="left:708px;top:24px" width="30" height="18" viewBox="708 24 30 18">
<rect x="712" y="29.500" width="4.200" height="5.400" fill="#8c8c8c" stroke="#b8b8b8" stroke-width="0.900"/>
<rect x="717.700" y="27.300" width="5.200" height="6.400" fill="#8e8e8e" stroke="#b0b0b0" stroke-width="0.900"/>
<path d="M711.200 28.700 L712 29.500 M716.900 28.700 L716.200 29.500 M711.200 35.700 L712 34.900 M717 26.600 L717.700 27.300 M723.600 26.600 L722.900 27.300" stroke="#a0a0a0" stroke-width="0.700"/>
<path d="M717.100 30.600 V38.200 L719 36.400 L722.600 35.600Z" fill="#cacaca"/>
<path d="M717.600 29.800 L722.800 34.400" stroke="#2e2e2e" stroke-width="0.800"/>
<path d="M728.400 30.900 H733.900 L731.150 34.800Z" fill="#e4e4e4"/>
</svg>
<!-- strip patches -->
<div class="abs" style="left:283px;top:546px;width:44px;height:2px;background:linear-gradient(to bottom,#58554e 0,#58554e 30%,#8a8a8a 30%);"></div>
<div class="abs" style="left:471px;top:546px;width:43px;height:2px;background:linear-gradient(to bottom,#58554e 0,#58554e 30%,#8e8e8e 30%);"></div>
<div class="abs" style="left:518px;top:546px;width:40px;height:2px;background:linear-gradient(to bottom,#58554e 0,#58554e 30%,#7c7c7c 30%);"></div>
<div class="abs" style="left:563px;top:546px;width:44px;height:2px;background:linear-gradient(to bottom,#58554e 0,#58554e 30%,#7a6e66 30%);"></div>
<div class="abs" style="left:611px;top:546px;width:44px;height:2px;background:linear-gradient(to bottom,#58554e 0,#58554e 30%,#cfcfcf 30%);"></div>
<div class="abs" style="left:656px;top:546px;width:368px;height:2px;background:linear-gradient(to bottom,#58554e 0,#58554e 30%,#5e5046 30%);"></div>

<span class="tx" style="left:3.80px;top:-1.74px;font-size:15.40px;color:#dfa035;font-weight:bold;transform:scaleX(0.9217)">Ai</span>
<span class="tx" style="left:355.00px;top:4.42px;font-size:7.60px;color:#161616;will-change:transform;transform:scaleX(0.8560)">Br</span>
<span class="tx" style="left:33.50px;top:2.97px;font-size:10.20px;color:#dedede;transform:scaleX(0.8221)">File</span>
<span class="tx" style="left:59.50px;top:2.97px;font-size:10.20px;color:#dedede;transform:scaleX(0.8826)">Edit</span>
<span class="tx" style="left:87.50px;top:2.97px;font-size:10.20px;color:#dedede;transform:scaleX(0.8997)">Object</span>
<span class="tx" style="left:127.00px;top:2.97px;font-size:10.20px;color:#dedede;transform:scaleX(0.8600)">Type</span>
<span class="tx" style="left:160.00px;top:2.97px;font-size:10.20px;color:#dedede;transform:scaleX(0.8119)">Select</span>
<span class="tx" style="left:196.70px;top:2.97px;font-size:10.20px;color:#dedede;transform:scaleX(0.8618)">Effect</span>
<span class="tx" style="left:232.40px;top:2.97px;font-size:10.20px;color:#dedede;transform:scaleX(0.8262)">View</span>
<span class="tx" style="left:264.50px;top:2.97px;font-size:10.20px;color:#dedede;transform:scaleX(0.8969)">Window</span>
<span class="tx" style="left:310.70px;top:2.97px;font-size:10.20px;color:#dedede;transform:scaleX(0.9068)">Help</span>
<span class="tx" style="left:891.00px;top:2.01px;font-size:9.60px;color:#c2c2c2;transform:scaleX(0.8689)">Essentials</span>
<span class="tx" style="left:8.50px;top:28.40px;font-size:8.40px;color:#dcdcdc;transform:scaleX(0.8421)">No Selection</span>
<span class="tx" style="left:136.00px;top:28.40px;font-size:8.40px;color:#e08a2a;transform:scaleX(0.9041)">Stroke:</span>
<span class="tx" style="left:180.00px;top:28.40px;font-size:8.40px;color:#151515;transform:scaleX(0.9296)">1 pt</span>
<span class="tx" style="left:265.00px;top:28.40px;font-size:8.40px;color:#1a1a2a;transform:scaleX(0.9206)">Uniform</span>
<span class="tx" style="left:331.60px;top:28.40px;font-size:8.40px;color:#1a1a2a;transform:scaleX(0.8866)">5 pt. Round</span>
<span class="tx" style="left:399.60px;top:28.40px;font-size:8.40px;color:#e08a2a;transform:scaleX(0.9143)">Opacity:</span>
<span class="tx" style="left:435.00px;top:28.40px;font-size:8.40px;color:#151515;transform:scaleX(0.8869)">100%</span>
<span class="tx" style="left:487.70px;top:28.40px;font-size:8.40px;color:#dcdcdc;transform:scaleX(0.8972)">Style:</span>
<span class="tx" style="left:563.00px;top:28.40px;font-size:8.40px;color:#dcdcdc;transform:scaleX(0.8815)">Document Setup</span>
<span class="tx" style="left:650.60px;top:28.40px;font-size:8.40px;color:#dcdcdc;transform:scaleX(0.8858)">Preferences</span>
<span class="tx" style="left:60.50px;top:49.59px;font-size:8.30px;color:#e8e8e8;-webkit-text-stroke:0.3px #e8e8e8;transform:scaleX(1.0568)">Untitled-2* @ 74% (CMYK/Preview)</span>
<span class="tx" style="left:59.50px;top:536.76px;font-size:8.00px;color:#0c0c0c;-webkit-text-stroke:0.2px #0c0c0c;transform:scaleX(0.9553)">74%</span>
<span class="tx" style="left:135.50px;top:536.76px;font-size:8.00px;color:#0c0c0c;-webkit-text-stroke:0.3px #0c0c0c;transform:scaleX(0.7411)">1</span>
<span class="tx" style="left:257.50px;top:536.40px;font-size:8.40px;color:#dcdcdc;transform:scaleX(0.8695)">Direct Selection</span>
<span class="tx" style="left:110.20px;top:120.83px;font-size:10.80px;color:#e8792c;font-weight:bold;transform:scaleX(1.0300)">Direction</span>
<span class="tx" style="left:111.00px;top:133.83px;font-size:10.80px;color:#e8792c;font-weight:bold;transform:scaleX(1.0413)">Selection Tool</span>
</body>
</html>
